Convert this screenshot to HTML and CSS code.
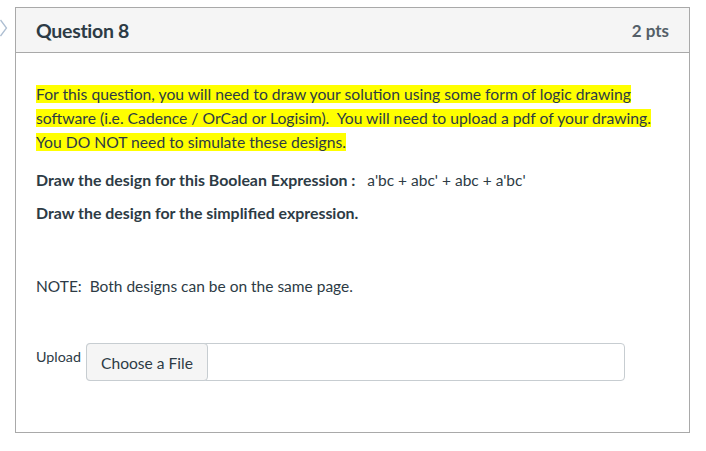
FILE: index.html
```html
<!DOCTYPE html>
<html>
<head>
<meta charset="utf-8">
<link rel="stylesheet" href="styles.css">
</head>
<body>
<div class="page">
  <svg class="chevron" width="8" height="18" viewBox="0 0 8 18"><path d="M0.5 1 L6.5 9 L0.5 17" fill="none" stroke="#aebfd2" stroke-width="1.3"/></svg>
  <div class="card">
    <div class="header">
      <h2 class="title">Question 8</h2>
      <span class="pts">2 pts</span>
    </div>
    <div class="body">
      <p class="p-intro"><span class="hl">For this question, you will need to draw your solution using some form of logic drawing software (i.e. Cadence / OrCad or Logisim).&nbsp; You will need to upload a pdf of your drawing. You DO NOT need to simulate these designs.</span></p>
      <p class="p-expr"><strong>Draw the design for this Boolean Expression :</strong>&nbsp;&nbsp; <span class="expr">a'bc + abc' + abc + a'bc'</span></p>
      <p class="p-simp"><strong>Draw the design for the simplified expression.</strong></p>
      <p class="p-note">NOTE:&nbsp; Both designs can be on the same page.</p>
      <div class="upload">
        <span class="upload-label">Upload</span>
        <div class="file">
          <span class="file-btn">Choose a File</span>
          <span class="file-name"></span>
        </div>
      </div>
    </div>
  </div>
</div>
</body>
</html>
```

FILE: styles.css
```css
html, body {
  margin: 0;
  padding: 0;
  background: #fff;
}
body {
  font-family: Lato, "Liberation Sans", sans-serif;
  color: #2d3b45;
  width: 706px;
  height: 451px;
  overflow: hidden;
}
.page {
  position: relative;
  padding: 7px 0 0 15px;
}
.chevron {
  position: absolute;
  left: 0;
  top: 19px;
}
.card {
  width: 673px;
  height: 424px;
  border: 1px solid #a9a9a9;
  box-sizing: content-box;
}
.header {
  display: flex;
  justify-content: space-between;
  align-items: center;
  height: 44px;
  background: #f5f5f5;
  border-bottom: 1px solid #a9a9a9;
  padding: 0 20px 0 20px;
}
.title {
  margin: 0;
  font-size: 19.5px;
  font-weight: 700;
  letter-spacing: -0.3px;
}
.pts {
  font-size: 17px;
  font-weight: 700;
  color: #545f68;
}
.body {
  padding: 29px 20px 0 20px;
  font-size: 15.5px;
}
.body p {
  margin: 0;
}
.p-intro {
  line-height: 24px;
  font-size: 15.7px;
}
.hl {
  background: #ffff00;
}
.p-expr {
  margin-top: 14px !important;
  line-height: 24px;
}
.p-expr strong {
  font-size: 15.9px;
}
.expr {
  font-size: 15.5px;
}
.p-simp {
  margin-top: 9px !important;
  line-height: 24px;
  font-size: 15.9px;
}
.p-note {
  margin-top: 49px !important;
  line-height: 24px;
}
.upload {
  display: flex;
  align-items: flex-start;
  margin-top: 45px;
}
.upload-label {
  font-size: 14.3px;
  line-height: 16px;
  padding-top: 6px;
  width: 50px;
}
.file {
  display: flex;
  width: 539px;
  height: 38px;
  border: 1px solid #c7cdd1;
  border-radius: 4px;
  box-sizing: border-box;
}
.file-btn {
  display: flex;
  align-items: center;
  justify-content: center;
  width: 122px;
  margin: -1px 0 -1px -1px;
  background: #f5f5f5;
  border: 1px solid #c7cdd1;
  border-radius: 4px;
  font-size: 15.6px;
  padding-top: 1px;
  box-sizing: border-box;
}
.file-name {
  flex: 1;
}
```
